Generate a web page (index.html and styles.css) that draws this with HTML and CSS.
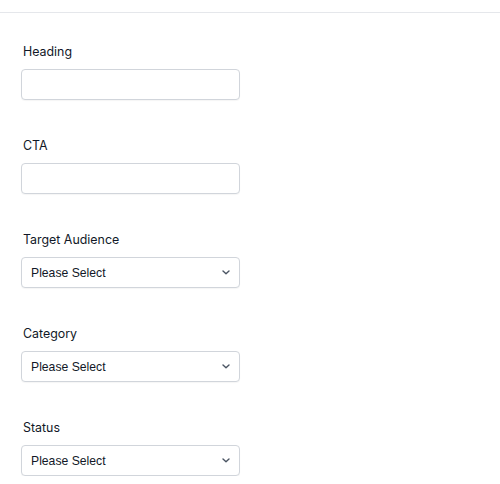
FILE: index.html
```html
<!DOCTYPE html>
<html lang="en">
<head>
<meta charset="utf-8">
<link rel="stylesheet" href="styles.css">
</head>
<body>
<div class="topbar"></div>
<form class="form">
  <div class="field">
    <label class="label">Heading</label>
    <div class="input"></div>
  </div>
  <div class="field">
    <label class="label">CTA</label>
    <div class="input"></div>
  </div>
  <div class="field">
    <label class="label">Target Audience</label>
    <div class="input select"><span class="value">Please Select</span><svg class="chev" width="8" height="5" viewBox="0 0 8 5"><path d="M1 1 L4 3.8 L7 1" fill="none" stroke="#4b5563" stroke-width="1.4" stroke-linecap="round" stroke-linejoin="round"/></svg></div>
  </div>
  <div class="field">
    <label class="label">Category</label>
    <div class="input select"><span class="value">Please Select</span><svg class="chev" width="8" height="5" viewBox="0 0 8 5"><path d="M1 1 L4 3.8 L7 1" fill="none" stroke="#4b5563" stroke-width="1.4" stroke-linecap="round" stroke-linejoin="round"/></svg></div>
  </div>
  <div class="field">
    <label class="label">Status</label>
    <div class="input select"><span class="value">Please Select</span><svg class="chev" width="8" height="5" viewBox="0 0 8 5"><path d="M1 1 L4 3.8 L7 1" fill="none" stroke="#4b5563" stroke-width="1.4" stroke-linecap="round" stroke-linejoin="round"/></svg></div>
  </div>
</form>
</body>
</html>
```

FILE: styles.css
```css
html, body {
  margin: 0;
  padding: 0;
  background: #ffffff;
}
body {
  font-family: Inter, "Noto Sans", sans-serif;
  color: #1f2937;
}
.topbar {
  height: 12px;
  border-bottom: 1px solid #e5e7eb;
}
.form {
  padding: 29px 0 0 21px;
  display: flex;
  flex-direction: column;
  gap: 36px;
}
.field {
  display: flex;
  flex-direction: column;
  gap: 7px;
}
.label {
  display: block;
  margin-left: 2px;
  font-size: 12.4px;
  line-height: 20px;
  font-weight: 400;
  color: #111827;
}
.input {
  box-sizing: border-box;
  width: 219px;
  height: 31px;
  border: 1px solid #d1d5db;
  border-radius: 4px;
  background: #ffffff;
  box-shadow: 0 1px 1px rgba(0, 0, 0, 0.04);
}
.select {
  display: flex;
  align-items: center;
  justify-content: space-between;
  padding: 0 9px 0 9px;
}
.value {
  font-family: "Liberation Sans", Arial, sans-serif;
  font-size: 12.2px;
  color: #111827;
}
.chev {
  display: block;
}
```
